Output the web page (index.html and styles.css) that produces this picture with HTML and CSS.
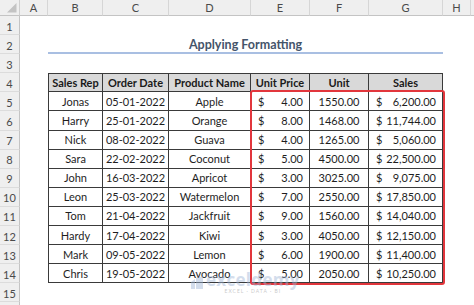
FILE: index.html
```html
<!DOCTYPE html>
<html>
<head>
<meta charset="utf-8">
<link rel="stylesheet" href="styles.css">
</head>
<body>
<div class="sheet">
  <div class="corner"><svg width="10" height="10" viewBox="0 0 10 10"><polygon points="0,9.5 9.5,9.5 9.5,0" fill="#c3c3c3"/></svg></div>
  <div class="ch">A</div><div class="ch">B</div><div class="ch">C</div><div class="ch">D</div><div class="ch">E</div><div class="ch">F</div><div class="ch">G</div><div class="ch">H</div><div class="ch"></div>

  <div class="rh">1</div><div class="c"></div><div class="c"></div><div class="c"></div><div class="c"></div><div class="c"></div><div class="c"></div><div class="c"></div><div class="c"></div><div class="c"></div>

  <div class="rh">2</div><div class="c"></div><div class="title">Applying Formatting</div><div class="c"></div><div class="c"></div>

  <div class="rh">3</div><div class="c"></div><div class="c"></div><div class="c"></div><div class="c"></div><div class="c"></div><div class="c"></div><div class="c"></div><div class="c"></div><div class="c"></div>

  <div class="rh">4</div><div class="c"></div>
  <div class="th first">Sales Rep</div><div class="th">Order Date</div><div class="th">Product Name</div><div class="th">Unit Price</div><div class="th">Unit</div><div class="th">Sales</div>
  <div class="c"></div><div class="c"></div>

  <div class="rh">5</div><div class="c"></div>
  <div class="td first">Jonas</div><div class="td">05-01-2022</div><div class="td">Apple</div><div class="td money"><span>$</span><span>4.00</span></div><div class="td">1550.00</div><div class="td money"><span>$</span><span>6,200.00</span></div>
  <div class="c"></div><div class="c"></div>

  <div class="rh">6</div><div class="c"></div>
  <div class="td first">Harry</div><div class="td">25-01-2022</div><div class="td">Orange</div><div class="td money"><span>$</span><span>8.00</span></div><div class="td">1468.00</div><div class="td money"><span>$</span><span>11,744.00</span></div>
  <div class="c"></div><div class="c"></div>

  <div class="rh">7</div><div class="c"></div>
  <div class="td first">Nick</div><div class="td">08-02-2022</div><div class="td">Guava</div><div class="td money"><span>$</span><span>4.00</span></div><div class="td">1265.00</div><div class="td money"><span>$</span><span>5,060.00</span></div>
  <div class="c"></div><div class="c"></div>

  <div class="rh">8</div><div class="c"></div>
  <div class="td first">Sara</div><div class="td">22-02-2022</div><div class="td">Coconut</div><div class="td money"><span>$</span><span>5.00</span></div><div class="td">4500.00</div><div class="td money"><span>$</span><span>22,500.00</span></div>
  <div class="c"></div><div class="c"></div>

  <div class="rh">9</div><div class="c"></div>
  <div class="td first">John</div><div class="td">16-03-2022</div><div class="td">Apricot</div><div class="td money"><span>$</span><span>3.00</span></div><div class="td">3025.00</div><div class="td money"><span>$</span><span>9,075.00</span></div>
  <div class="c"></div><div class="c"></div>

  <div class="rh">10</div><div class="c"></div>
  <div class="td first">Leon</div><div class="td">25-03-2022</div><div class="td">Watermelon</div><div class="td money"><span>$</span><span>7.00</span></div><div class="td">2550.00</div><div class="td money"><span>$</span><span>17,850.00</span></div>
  <div class="c"></div><div class="c"></div>

  <div class="rh">11</div><div class="c"></div>
  <div class="td first">Tom</div><div class="td">21-04-2022</div><div class="td">Jackfruit</div><div class="td money"><span>$</span><span>9.00</span></div><div class="td">1560.00</div><div class="td money"><span>$</span><span>14,040.00</span></div>
  <div class="c"></div><div class="c"></div>

  <div class="rh">12</div><div class="c"></div>
  <div class="td first">Hardy</div><div class="td">17-04-2022</div><div class="td">Kiwi</div><div class="td money"><span>$</span><span>3.00</span></div><div class="td">4050.00</div><div class="td money"><span>$</span><span>12,150.00</span></div>
  <div class="c"></div><div class="c"></div>

  <div class="rh">13</div><div class="c"></div>
  <div class="td first">Mark</div><div class="td">09-05-2022</div><div class="td">Lemon</div><div class="td money"><span>$</span><span>6.00</span></div><div class="td">1900.00</div><div class="td money"><span>$</span><span>11,400.00</span></div>
  <div class="c"></div><div class="c"></div>

  <div class="rh">14</div><div class="c"></div>
  <div class="td first">Chris</div><div class="td">19-05-2022</div><div class="td">Avocado</div><div class="td money"><span>$</span><span>5.00</span></div><div class="td">2050.00</div><div class="td money"><span>$</span><span>10,250.00</span></div>
  <div class="c"></div><div class="c"></div>

  <div class="rh">15</div><div class="c"></div><div class="c"></div><div class="c"></div><div class="c"></div><div class="c"></div><div class="c"></div><div class="c"></div><div class="c"></div><div class="c"></div>

  <div class="rh"></div><div class="c"></div><div class="c"></div><div class="c"></div><div class="c"></div><div class="c"></div><div class="c"></div><div class="c"></div><div class="c"></div><div class="c"></div>

  <div class="highlight"></div>

  <div class="watermark">
    <svg class="wm-icon" width="14" height="14" viewBox="0 0 14 14"><path d="M1 13 L1 6 L5 3 L5 13 Z M6 13 L6 2 L13 0 L13 13 Z" fill="#9fb6d6"/></svg>
    <div class="wm-text">
      <div class="wm-name">exceldemy</div>
      <div class="wm-sub">EXCEL · DATA · BI</div>
    </div>
  </div>
</div>
</body>
</html>
```

FILE: styles.css
```css
* { box-sizing: border-box; }

html, body {
  margin: 0;
  padding: 0;
  background: #ffffff;
  overflow: hidden;
}

body {
  font-family: Lato, "Open Sans", "Liberation Sans", sans-serif;
  color: #1e1e1e;
}

.sheet {
  position: relative;
  display: grid;
  grid-template-columns: 20px 28px 55px 66px 82px 59px 59px 74px 28px 30px;
  grid-template-rows: 16px repeat(16, 19.1px);
  width: 474px;
  height: 305px;
  overflow: hidden;
}

.corner {
  background: #efefef;
  border-right: 1px solid #cfcfcf;
  border-bottom: 1px solid #c4c4c4;
  display: flex;
  align-items: flex-end;
  justify-content: flex-end;
  padding: 0 2px 2px 0;
}

.corner svg { display: block; }

.ch {
  background: #efefef;
  border-right: 1px solid #d6d6d6;
  border-bottom: 1px solid #c4c4c4;
  color: #4a4a4a;
  font-size: 11px;
  display: flex;
  align-items: center;
  justify-content: center;
}

.rh {
  background: #efefef;
  border-right: 1px solid #c4c4c4;
  border-bottom: 1px solid #dcdcdc;
  color: #4a4a4a;
  font-size: 11px;
  display: flex;
  align-items: center;
  justify-content: center;
  padding-top: 2px;
}

.c { background: #ffffff; }

.title {
  grid-column: span 6;
  border-bottom: 2px solid #a9bfe2;
  color: #44546a;
  font-weight: 700;
  font-size: 12.5px;
  display: flex;
  align-items: center;
  justify-content: center;
  padding-top: 1px;
}

.th, .td {
  border-right: 1px solid #3a3a3a;
  border-bottom: 1px solid #3a3a3a;
  font-size: 11px;
  display: flex;
  align-items: center;
  justify-content: center;
  white-space: nowrap;
}

.th {
  background: #d9d9d9;
  border-top: 1px solid #3a3a3a;
  font-weight: 700;
  color: #1a1a1a;
}

.first { border-left: 1px solid #3a3a3a; }

.td.money {
  justify-content: space-between;
  padding: 0 6px 0 7px;
}

.highlight {
  position: absolute;
  grid-column: 6 / 9;
  grid-row: 6 / 16;
  top: -2px;
  left: -1px;
  right: -2px;
  bottom: -2px;
  border: 2.5px solid #e2363c;
  border-radius: 3px;
  pointer-events: none;
}

.watermark {
  position: absolute;
  left: 190px;
  top: 272px;
  display: flex;
  align-items: flex-start;
  gap: 2px;
  opacity: 0.45;
  pointer-events: none;
}

.wm-icon { margin-top: 4px; }

.wm-text {
  display: flex;
  flex-direction: column;
  align-items: center;
}

.wm-name {
  font-family: "Open Sans", Lato, sans-serif;
  font-size: 17px;
  font-weight: 700;
  color: #9fb6d6;
  line-height: 16px;
  letter-spacing: 0.3px;
}

.wm-sub {
  font-size: 5px;
  color: #8a8a8a;
  letter-spacing: 1px;
  line-height: 7px;
}
```
